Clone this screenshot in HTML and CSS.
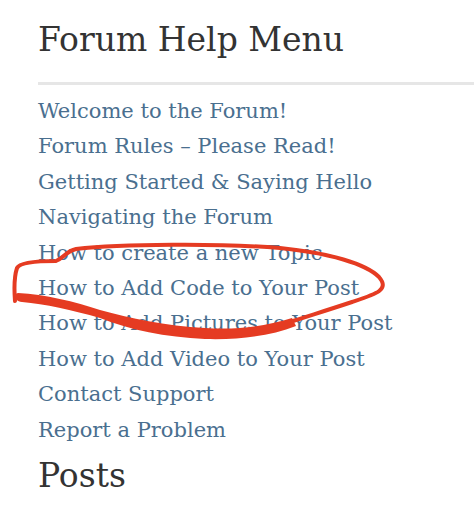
FILE: index.html
```html
<!DOCTYPE html>
<html lang="en">
<head>
    <meta charset="UTF-8">
    <meta name="viewport" content="width=device-width, initial-scale=1.0">
    <title>Forum Help Menu</title>
    <link rel="stylesheet" href="styles.css">
</head>
<body>
    <div class="sidebar">
        <h2 class="widget-title">Forum Help Menu</h2>
        <ul class="help-menu">
            <li><a href="#">Welcome to the Forum!</a></li>
            <li><a href="#">Forum Rules &ndash; Please Read!</a></li>
            <li><a href="#">Getting Started &amp; Saying Hello</a></li>
            <li><a href="#">Navigating the Forum</a></li>
            <li><a href="#">How to create a new Topic</a></li>
            <li><a href="#">How to Add Code to Your Post</a></li>
            <li><a href="#">How to Add Pictures to Your Post</a></li>
            <li><a href="#">How to Add Video to Your Post</a></li>
            <li><a href="#">Contact Support</a></li>
            <li><a href="#">Report a Problem</a></li>
        </ul>
        <h2 class="section-title">Posts</h2>

        <!-- red marker drawn over the screenshot -->
        <svg class="scribble" width="474" height="513" viewBox="0 0 474 513">
            <path d="M15 301 C14 288 15 274 17 268 C20 262 40 261 56 261 C64 258 66 251 76 249 C120 244 220 243 280 248 C330 253 366 264 379 277 C390 290 376 294 352 302 C325 311 308 316 293 321"
                  fill="none" stroke="#e53b22" stroke-width="4" stroke-linecap="round"/>
            <path d="M18 293 C45 294 75 302 100 310 C130 318 165 326 205 328 C240 330 265 326 292 318 L296 326 C270 336 240 340 205 339 C165 337 130 330 100 318 C72 310 45 304 22 302 C14 301 12 294 18 293 Z"
                  fill="#e53b22"/>
        </svg>
    </div>
</body>
</html>
```

FILE: styles.css
```css
body {
    margin: 0;
    background: #fff;
    font-family: "DejaVu Serif", "Liberation Serif", serif;
}
.sidebar {
    position: relative;
    padding: 18px 0 0 38px;
    height: 495px;
    overflow: hidden;
}
.widget-title {
    font-size: 33px;
    font-weight: normal;
    color: #333;
    margin: 0;
    padding-bottom: 20px;
    border-bottom: 3px solid #e6e6e6;
    line-height: 44px;
}
.help-menu {
    list-style: none;
    margin: 0;
    padding: 9px 0 0;
}
.help-menu li {
    font-size: 21px;
    line-height: 35.4px;
}
.help-menu a {
    color: #4a6f8f;
    text-decoration: none;
}
.section-title {
    font-size: 33px;
    font-weight: normal;
    color: #333;
    margin: 6px 0 0;
    line-height: 44px;
}
.scribble {
    position: absolute;
    left: 0;
    top: 0;
    pointer-events: none;
}
```
